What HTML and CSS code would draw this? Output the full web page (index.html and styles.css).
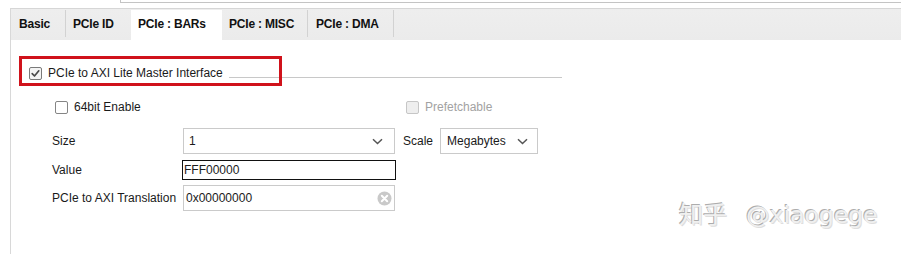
FILE: index.html
```html
<!DOCTYPE html>
<html>
<head>
<meta charset="utf-8">
<link rel="stylesheet" href="styles.css">
</head>
<body>
<div class="topfield"></div>
<div class="panel">
  <div class="tabs">
    <div class="tab t-basic">Basic</div>
    <div class="tab t-id">PCIe ID</div>
    <div class="tab t-bars active">PCIe : BARs</div>
    <div class="tab t-misc">PCIe : MISC</div>
    <div class="tab t-dma">PCIe : DMA</div>
  </div>
  <div class="content">
    <div class="group-head">
      <span class="cb checked"><svg width="11" height="11" viewBox="0 0 11 11"><path d="M2.2 5.6 L4.5 8 L8.8 2.8" fill="none" stroke="#4a4a4a" stroke-width="1.7" stroke-linecap="round" stroke-linejoin="round"/></svg></span>
      <span class="group-title">PCIe to AXI Lite Master Interface</span>
      <span class="group-line"></span>
      <div class="highlight"></div>
    </div>
    <div class="opts">
      <div class="opt"><span class="cb"></span><span>64bit Enable</span></div>
      <div class="opt disabled"><span class="cb"></span><span>Prefetchable</span></div>
    </div>
    <div class="form">
      <div class="row row-size">
        <span class="lbl">Size</span>
        <div class="select wide"><span>1</span><svg class="chev" width="11" height="7" viewBox="0 0 11 7"><path d="M1 1.2 L5.5 5.5 L10 1.2" fill="none" stroke="#555" stroke-width="1.5"/></svg></div>
        <span class="lbl-inline">Scale</span>
        <div class="select narrow"><span>Megabytes</span><svg class="chev" width="11" height="7" viewBox="0 0 11 7"><path d="M1 1.2 L5.5 5.5 L10 1.2" fill="none" stroke="#555" stroke-width="1.5"/></svg></div>
      </div>
      <div class="row row-value">
        <span class="lbl">Value</span>
        <div class="input editing">FFF00000</div>
      </div>
      <div class="row row-trans">
        <span class="lbl">PCIe to AXI Translation</span>
        <div class="input plain"><span>0x00000000</span><svg class="clear" width="15" height="15" viewBox="0 0 15 15"><circle cx="7.5" cy="7.5" r="7" fill="#c9c9c9"/><path d="M4.8 4.8 L10.2 10.2 M10.2 4.8 L4.8 10.2" stroke="#fff" stroke-width="2" stroke-linecap="round"/></svg></div>
      </div>
    </div>
  </div>
</div>
<div class="watermark"><span class="wm-cn">知乎</span>@xiaogege</div>
</body>
</html>
```
FILE: styles.css
```css
html, body {
  margin: 0;
  padding: 0;
  background: #fff;
}
body {
  font-family: "Liberation Sans", Arial, sans-serif;
  font-size: 12px;
  color: #1a1a1a;
  width: 901px;
  height: 254px;
  overflow: hidden;
  position: relative;
}
.topfield {
  height: 2px;
  margin-left: 120px;
  border-left: 1px solid #c4c4c4;
  border-bottom: 1px solid #c4c4c4;
  margin-bottom: 5px;
}
.panel {
  margin-left: 10px;
  border-left: 1px solid #d8d8d8;
  border-top: 1px solid #d6d6d6;
  height: 245px;
}
.tabs {
  display: flex;
  height: 31px;
  background: linear-gradient(#eeeeee, #ebebeb);
}
.tab {
  position: relative;
  box-sizing: border-box;
  display: flex;
  align-items: center;
  padding: 0 0 1px 7px;
  font-weight: bold;
  color: #111;
  white-space: nowrap;
  letter-spacing: -0.2px;
}
.tab::after {
  content: "";
  position: absolute;
  right: 0;
  top: 1px;
  bottom: 3px;
  width: 1px;
  background: #d2d2d2;
}
.tab.active {
  background: #fff;
  margin-top: 1px;
  padding-bottom: 2px;
}
.tab.active::after,
.t-id::after {
  display: none;
}
.t-basic { width: 55px; padding-left: 8px; }
.t-id { width: 65px; }
.t-bars { width: 91px; }
.t-misc { width: 86px; }
.t-dma { width: 86px; padding-left: 8px; }
.content {
  padding: 26px 0 0 18px;
}
.group-head {
  position: relative;
  display: flex;
  align-items: center;
  height: 14px;
}
.cb {
  box-sizing: border-box;
  width: 13px;
  height: 13px;
  border: 1px solid #858585;
  border-radius: 2px;
  background: #fff;
  display: flex;
  align-items: center;
  justify-content: center;
  flex: none;
}
.cb.checked {
  background: #f4f4f4;
  border-color: #7a7a7a;
}
.group-title {
  margin-left: 6px;
  white-space: nowrap;
}
.group-line {
  width: 333px;
  height: 0;
  border-top: 1px solid #c8c8c8;
  margin-left: 6px;
  align-self: flex-end;
  margin-bottom: 2px;
}
.highlight {
  position: absolute;
  left: -10px;
  top: -10px;
  width: 263px;
  height: 30px;
  box-sizing: border-box;
  border: 3px solid #d0121b;
}
.opts {
  display: flex;
  margin-top: 20px;
  padding-left: 26px;
  height: 14px;
}
.opt {
  display: flex;
  align-items: center;
  gap: 6px;
}
.opt:first-child {
  width: 351px;
}
.opt.disabled {
  color: #a2a2a2;
}
.opt.disabled .cb {
  border-color: #c6c6c6;
  background: #eeeeee;
}
.form {
  margin-top: 14px;
  padding-left: 23px;
}
.row {
  display: flex;
  align-items: center;
}
.lbl {
  width: 131px;
  flex: none;
}
.row-size { height: 26px; }
.row-value { height: 20px; margin-top: 6px; }
.row-trans { height: 26px; margin-top: 5px; }
.select, .input {
  box-sizing: border-box;
  display: flex;
  align-items: center;
  background: #fff;
  height: 100%;
}
.select {
  border: 1px solid #cacaca;
  justify-content: space-between;
}
.select.wide {
  width: 212px;
  padding: 0 11px 0 5px;
}
.select.narrow {
  width: 98px;
  padding: 0 9px 0 6px;
  margin-left: 7px;
}
.lbl-inline {
  margin-left: 8px;
}
.input.editing {
  width: 214px;
  margin-left: -1px;
  border: 1px solid #111;
  padding-left: 1px;
}
.input.plain {
  width: 212px;
  border: 1px solid #cacaca;
  padding: 0 2px 0 2px;
  justify-content: space-between;
}
.watermark {
  position: absolute;
  left: 679px;
  top: 195px;
  font-family: "DejaVu Sans", "Noto Sans CJK SC", sans-serif;
  font-size: 23.5px;
  color: #f0f0f0;
  text-shadow: -1px -1px 0 #adadad, 1px 1px 0 #dedede;
  white-space: nowrap;
}
.wm-cn {
  font-family: "Noto Sans CJK SC", sans-serif;
  font-size: 24px;
  margin-right: 19px;
}
```
